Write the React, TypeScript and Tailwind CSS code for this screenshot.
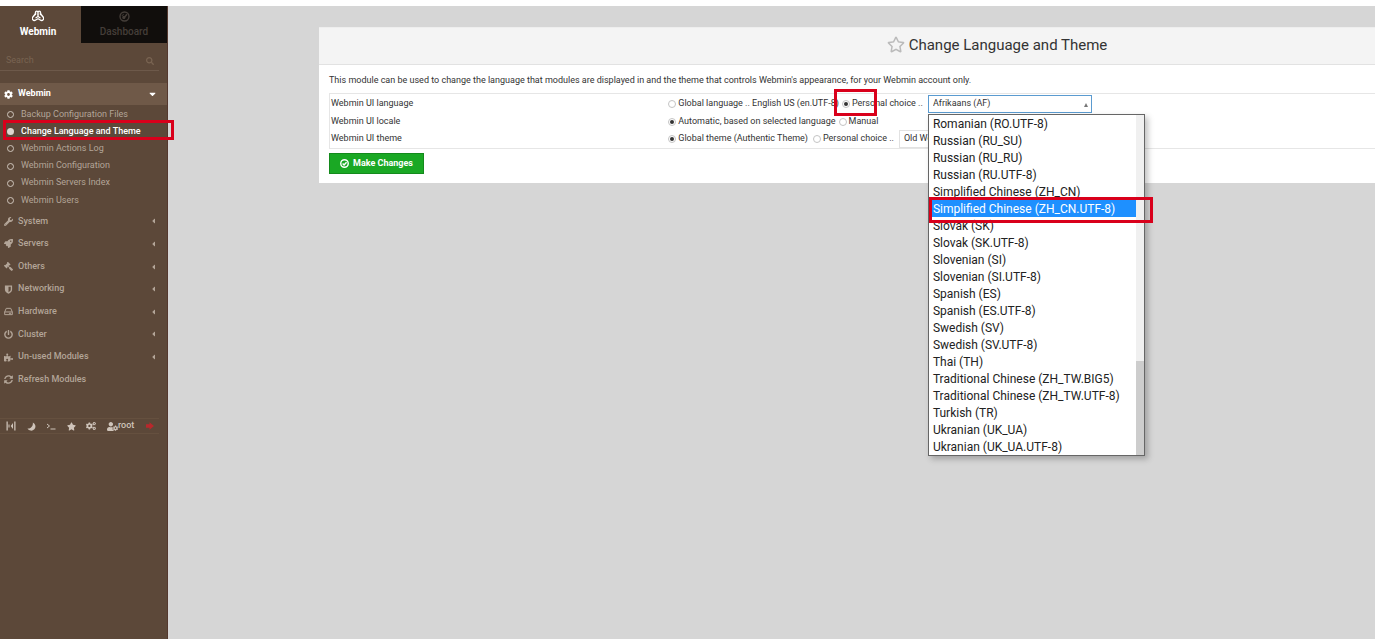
import { useState } from 'react';
import {
  FaCaretDown,
  FaCaretLeft,
  FaCog,
  FaCogs,
  FaGavel,
  FaPowerOff,
  FaPuzzlePiece,
  FaRegStar,
  FaRocket,
  FaSearch,
  FaStar,
  FaSyncAlt,
  FaUserCog,
  FaWrench,
} from 'react-icons/fa';

interface IconProps {
  className?: string;
}

const WebminLogo = () => (
  <svg viewBox="0 0 24 24" className="h-3 w-3" fill="none" stroke="currentColor" strokeWidth="2.8" strokeLinejoin="round" strokeLinecap="round">
    <path d="M7 9V4.800a2.500 2.500 0 0 1 5 0V9M12 9V4.800a2.500 2.500 0 0 1 5 0V9" />
    <path d="M7 7.500 2.200 13.500a3.800 3.800 0 0 0 5.200 6.500L12 17.500l4.600 2.500a3.800 3.800 0 0 0 5.200-6.500L17 7.500" />
    <path d="M12 10v3M12 13l-4 2.500M12 13l4 2.500" />
  </svg>
);

const GaugeIcon = ({ className }: IconProps) => (
  <svg viewBox="0 0 24 24" className={className} fill="none" stroke="currentColor" strokeWidth="3">
    <circle cx="12" cy="12" r="9.800" />
    <path d="M11 14.500 16.500 8" strokeWidth="3.400" strokeLinecap="round" />
    <circle cx="10.500" cy="14" r="2" fill="currentColor" />
    <path d="M6.500 11a5.500 5.500 0 0 1 4-4" strokeWidth="2" />
  </svg>
);

const CheckCircle = () => (
  <svg viewBox="0 0 24 24" className="h-[9px] w-[9px]" fill="none" stroke="currentColor" strokeWidth="3.800">
    <circle cx="12" cy="12" r="10" />
    <path d="m7 12 3.800 3.800L17.500 8.500" />
  </svg>
);

const ShieldIcon = ({ className }: IconProps) => (
  <svg viewBox="0 0 20 20" className={className} fill="currentColor">
    <path fillRule="evenodd" d="M2 1h16v9c0 4.500-3.500 7.500-8 9.500C5.500 17.500 2 14.500 2 10zm8 3v12c3.200-1.700 5-3.500 5-6V4z" />
  </svg>
);

const DriveIcon = ({ className }: IconProps) => (
  <svg viewBox="0 0 20 20" className={className} fill="none" stroke="currentColor" strokeWidth="2.200" strokeLinejoin="round">
    <path d="M1.500 11 5 3h10l3.500 8v6h-17zM1.500 11h17" />
    <path d="M11 14h5" />
  </svg>
);

const CollapseIcon = () => (
  <svg viewBox="0 0 20 20" className="h-[10px] w-[10px]" fill="currentColor">
    <path d="M1 1h2.500v18H1zM16.500 1H19v18h-2.500zM14 4v12l-4.500-6zM7 7v6H5V7z" />
  </svg>
);

const MoonIcon = () => (
  <svg viewBox="0 0 20 20" className="h-[9px] w-[9px]" fill="currentColor">
    <path d="M13 1a9.500 9.500 0 1 1-12 13.500C8 15.500 14 9.500 13 1z" />
  </svg>
);

const TerminalIcon = () => (
  <svg viewBox="0 0 20 20" className="h-[10px] w-[10px]" fill="none" stroke="currentColor" strokeWidth="2">
    <path d="m2 6 5 4-5 4M9 16h10" />
  </svg>
);

const LogoutIcon = () => (
  <svg viewBox="0 0 20 20" className="h-[10px] w-[10px]" fill="currentColor">
    <path d="M2 6.500h7V2.500l9 7.500-9 7.500v-4H2z" />
  </svg>
);

const modules = [
  'Backup Configuration Files',
  'Change Language and Theme',
  'Webmin Actions Log',
  'Webmin Configuration',
  'Webmin Servers Index',
  'Webmin Users',
];

const categories = [
  { name: 'System', icon: FaWrench, arrow: true },
  { name: 'Servers', icon: FaRocket, arrow: true },
  { name: 'Others', icon: FaGavel, arrow: true },
  { name: 'Networking', icon: ShieldIcon, arrow: true },
  { name: 'Hardware', icon: DriveIcon, arrow: true },
  { name: 'Cluster', icon: FaPowerOff, arrow: true },
  { name: 'Un-used Modules', icon: FaPuzzlePiece, arrow: true },
  { name: 'Refresh Modules', icon: FaSyncAlt, arrow: false },
];

const languages = [
  'Romanian (RO.UTF-8)',
  'Russian (RU_SU)',
  'Russian (RU_RU)',
  'Russian (RU.UTF-8)',
  'Simplified Chinese (ZH_CN)',
  'Simplified Chinese (ZH_CN.UTF-8)',
  'Slovak (SK)',
  'Slovak (SK.UTF-8)',
  'Slovenian (SI)',
  'Slovenian (SI.UTF-8)',
  'Spanish (ES)',
  'Spanish (ES.UTF-8)',
  'Swedish (SV)',
  'Swedish (SV.UTF-8)',
  'Thai (TH)',
  'Traditional Chinese (ZH_TW.BIG5)',
  'Traditional Chinese (ZH_TW.UTF-8)',
  'Turkish (TR)',
  'Ukranian (UK_UA)',
  'Ukranian (UK_UA.UTF-8)',
];

interface RadioProps {
  name: string;
  label: string;
  checked: boolean;
  onChange: () => void;
}

const Radio: React.FC<RadioProps> = ({ name, label, checked, onChange }) => (
  <label className="flex items-center gap-[2px] whitespace-nowrap">
    <input
      type="radio"
      name={name}
      checked={checked}
      onChange={onChange}
      className="h-2 w-2 shrink-0 appearance-none rounded-full border border-[#c4c4c4] bg-white checked:bg-[#333] checked:bg-clip-content checked:p-px"
    />
    {label}
  </label>
);

const Sidebar = () => (
  <aside className="flex w-[168px] shrink-0 flex-col border-r border-[#54382e] bg-[#5c4839] text-[9px] font-medium text-[#b3a598]">
    <div className="flex h-[37px] text-[10px] leading-[14px]">
      <button className="flex w-[81px] flex-col items-center pr-[5px] pt-1 font-bold text-white">
        <WebminLogo />
        <span className="pt-[3px]">Webmin</span>
      </button>
      <button className="flex flex-1 flex-col items-center bg-[#110e0c] pt-[5px] text-[#453e39]">
        <GaugeIcon className="h-[11px] w-[11px]" />
        <span className="pt-[3px]">Dashboard</span>
      </button>
    </div>

    <div className="mr-2 mt-2 flex h-5 items-center border-b border-[#6d594a] pl-[6px] pr-[5px] text-[#796452]">
      <input
        type="text"
        aria-label="Search"
        placeholder="Search"
        className="min-w-0 flex-1 font-normal outline-none placeholder:text-[#796452]"
      />
      <FaSearch className="h-2 w-2" />
    </div>

    <button className="mt-3 flex h-[22px] items-center bg-[#6f5948] pl-1 pr-[11px] font-bold text-white">
      <FaCog className="mr-[5px] h-[9px] w-[9px]" />
      Webmin
      <FaCaretDown className="ml-auto h-[10px] w-[7px]" />
    </button>

    <ul className="mt-px grid h-[103px] auto-rows-fr">
      {modules.map((name, i) => (
        <li key={name} className="relative flex items-center pl-[7px]">
          <span className={i === 1 ? 'h-[7px] w-[7px] rounded-full bg-[#ddd5cf]' : 'h-[7px] w-[7px] rounded-full border border-[#cfc5bc]'} />
          <a href="#" className={i === 1 ? 'ml-[7px] font-medium text-white' : 'ml-[7px] font-normal'}>
            {name}
          </a>
          {i === 1 && <div className="pointer-events-none absolute -top-[3px] left-[3px] z-10 h-5 w-[171px] border-3 border-[#d9001b]" />}
        </li>
      ))}
    </ul>

    <ul className="mt-px grid h-[181px] auto-rows-fr">
      {categories.map(({ name, icon: Icon, arrow }) => (
        <li key={name} className="flex">
          <button className="flex flex-1 items-center pl-1 pr-[11px]">
            <Icon className={name === 'Others' ? 'mr-[5px] h-[9px] w-[9px] -scale-x-100' : 'mr-[5px] h-[9px] w-[9px]'} />
            {name}
            {arrow && <FaCaretLeft className="ml-auto h-2 w-[5px]" />}
          </button>
        </li>
      ))}
    </ul>

    <div className="mr-2 mt-[27px] flex h-4 items-center justify-between border-y border-[#65503f] pl-[6px] pr-1 text-[#cfc4ba]">
      <button aria-label="Collapse"><CollapseIcon /></button>
      <button aria-label="Night mode"><MoonIcon /></button>
      <button aria-label="Terminal"><TerminalIcon /></button>
      <button aria-label="Favorites"><FaStar className="h-[9px] w-[9px]" /></button>
      <button aria-label="Theme settings"><FaCogs className="h-[10px] w-[10px]" /></button>
      <button className="flex items-center">
        <FaUserCog className="h-[9px] w-[11px]" />
        root
      </button>
      <button aria-label="Log out" className="text-[#b8282c]"><LogoutIcon /></button>
    </div>
  </aside>
);

const App = () => {
  const [language, setLanguage] = useState('personal');
  const [locale, setLocale] = useState('auto');
  const [theme, setTheme] = useState('global');
  const [active, setActive] = useState('Simplified Chinese (ZH_CN.UTF-8)');

  return (
    <div className="flex min-h-screen flex-col bg-[#d6d6d6] font-['Roboto',sans-serif] text-[9px] text-[#333]">
      <div className="h-[6px] bg-white" />
      <div className="flex flex-1">
        <Sidebar />
        <div className="min-w-0 flex-1 overflow-hidden pl-[151px] pt-[21px]">
          {/* the panel runs on past the right edge of the window */}
          <main className="-mr-[300px] border-t border-[#eee] bg-white pb-[9px]">
            <header className="flex h-[37px] items-center justify-center gap-1 border-b border-[#e2e2e2] bg-[#f4f4f4] pb-[3px]">
              <FaRegStar className="h-[17px] w-[18px] text-[#bbb]" />
              <h1 className="text-[15px] leading-5">Change Language and Theme</h1>
            </header>

            <div className="px-[10px]">
              <p className="pt-[9px] leading-[12px]">
                This module can be used to change the language that modules are displayed in and the theme that controls Webmin's appearance, for your Webmin account only.
              </p>

              <table className="mt-[7px] w-full table-fixed border border-[#e6e6e6]">
                <tbody>
                  <tr className="h-[19px]">
                    <td className="w-1/4 pl-px">Webmin UI language</td>
                    <td className="pt-px">
                      <div className="flex items-center pl-[5px]">
                        <Radio name="language" label="Global language .. English US (en.UTF-8)" checked={language === 'global'} onChange={() => setLanguage('global')} />
                        <div className="relative ml-[3px]">
                          <Radio name="language" label="Personal choice .." checked={language === 'personal'} onChange={() => setLanguage('personal')} />
                          <div className="pointer-events-none absolute -left-2 -top-2 h-[27px] w-[43px] border-3 border-[#d9001b]" />
                        </div>
                        <div className="relative ml-[5px]">
                          <select aria-label="Language" className="block h-[18px] w-[164px] appearance-none border border-[#5b9bd0] bg-white px-1 pb-px">
                            <option>Afrikaans (AF)</option>
                          </select>
                          <span className="pointer-events-none absolute right-1 top-2 border-x-2 border-b-4 border-x-transparent border-b-[#777]" />

                          <div className="absolute left-0 top-[19px] z-10 flex w-[217px] border border-[#666] bg-white text-[12px] text-[#222] shadow-[3px_3px_6px_rgba(0,0,0,0.25)]">
                            <ul role="listbox" aria-label="Languages" className="flex-1">
                              {languages.map((name) => (
                                <li
                                  key={name}
                                  role="option"
                                  aria-selected={name === active}
                                  onMouseEnter={() => setActive(name)}
                                  className={name === active ? 'h-[17px] whitespace-nowrap bg-[#1e90ff] pl-1 leading-[18px] text-white' : 'h-[17px] whitespace-nowrap pl-1 leading-[18px]'}
                                >
                                  {name}
                                </li>
                              ))}
                            </ul>
                            <div className="flex w-2 flex-col justify-end bg-[#f0f0f0]">
                              <div className="h-[94px] bg-[#cdcdcd]" />
                            </div>
                            <div className="pointer-events-none absolute left-0 top-[82px] h-[26px] w-[224px] border-3 border-[#d9001b]" />
                          </div>
                        </div>
                      </div>
                    </td>
                  </tr>
                  <tr className="h-[17px]">
                    <td className="pl-px">Webmin UI locale</td>
                    <td>
                      <div className="flex items-center gap-[3px] pl-[5px]">
                        <Radio name="locale" label="Automatic, based on selected language" checked={locale === 'auto'} onChange={() => setLocale('auto')} />
                        <Radio name="locale" label="Manual" checked={locale === 'manual'} onChange={() => setLocale('manual')} />
                      </div>
                    </td>
                  </tr>
                  <tr className="h-[18px]">
                    <td className="pl-px">Webmin UI theme</td>
                    <td>
                      <div className="flex items-center gap-[5px] pl-[5px]">
                        <Radio name="theme" label="Global theme (Authentic Theme)" checked={theme === 'global'} onChange={() => setTheme('global')} />
                        <Radio name="theme" label="Personal choice .." checked={theme === 'personal'} onChange={() => setTheme('personal')} />
                        <select aria-label="Theme" className="h-[18px] w-[120px] appearance-none border border-[#e2e2e2] bg-white px-1">
                          <option>Old Webmin Theme</option>
                        </select>
                      </div>
                    </td>
                  </tr>
                </tbody>
              </table>

              <button className="mt-1 flex h-[21px] items-center gap-1 border border-[#148a1c] bg-[#1aa824] px-[10px] font-bold text-white">
                <CheckCircle />
                Make Changes
              </button>
            </div>
          </main>
        </div>
      </div>
    </div>
  );
};

export default App;
